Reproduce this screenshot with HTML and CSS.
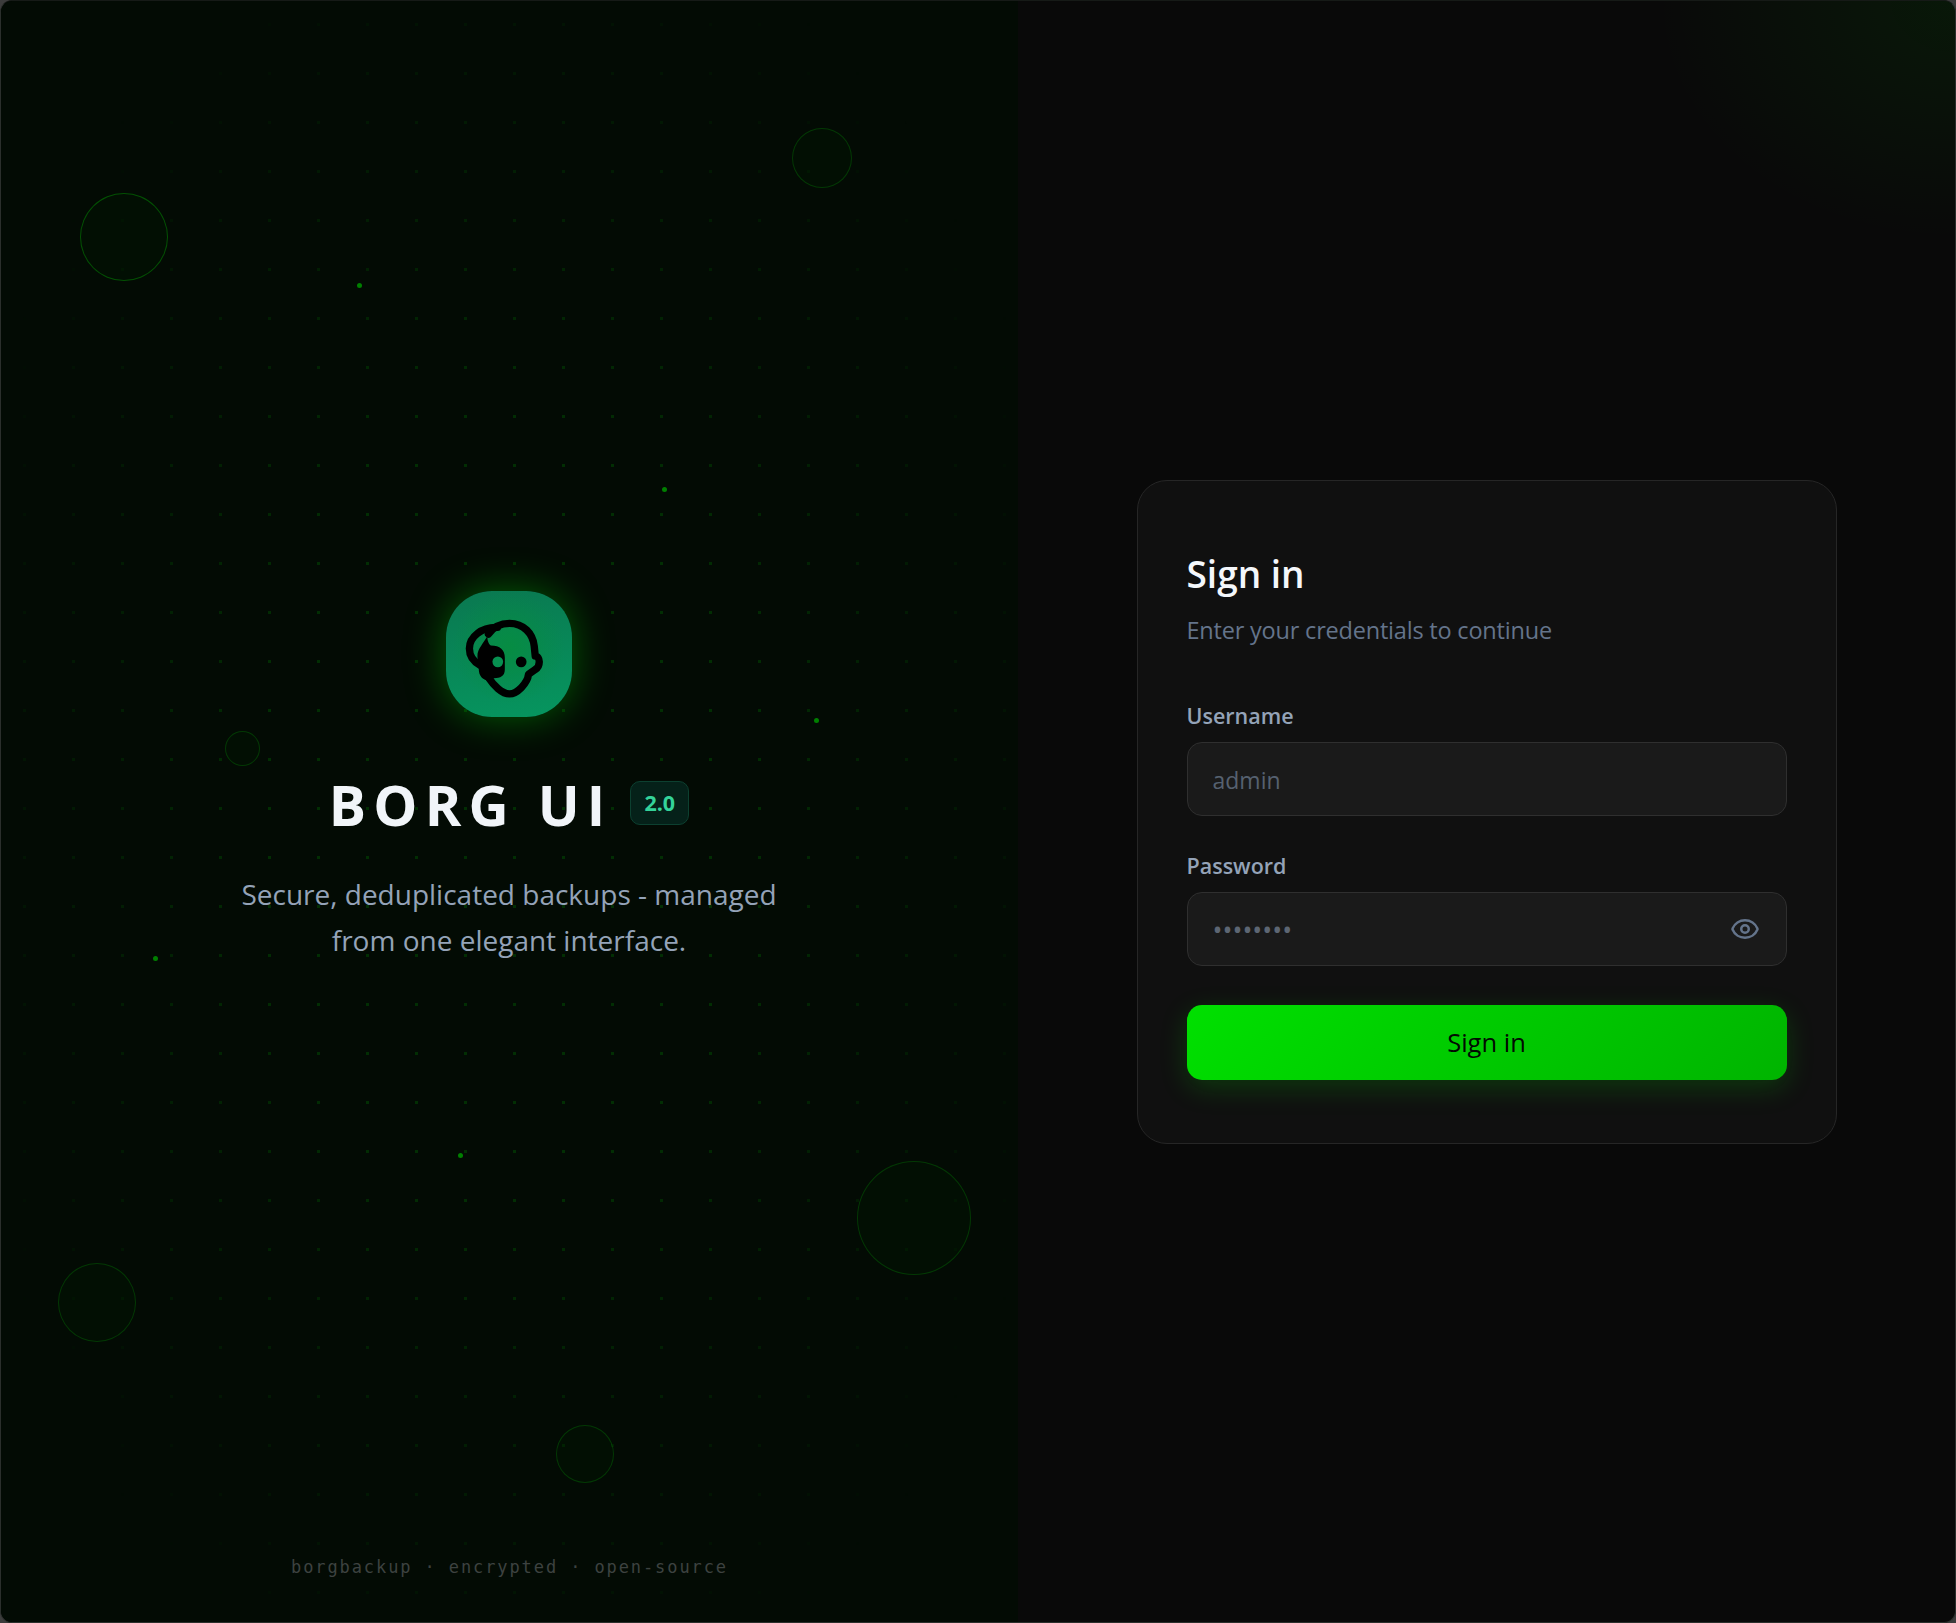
FILE: index.html
```html
<!DOCTYPE html>
<html>
<head>
  <title>Borg UI - Sign in</title>
  <link rel="stylesheet" href="styles.css">
</head>
<body>
  <div class="window">
    <div class="brand-panel">
      <div class="dot-grid"></div>

      <span class="bubble bubble-a"></span>
      <span class="bubble bubble-b"></span>
      <span class="bubble bubble-c"></span>
      <span class="bubble bubble-d"></span>
      <span class="bubble bubble-e"></span>
      <span class="bubble bubble-f"></span>

      <span class="spark spark-a"></span>
      <span class="spark spark-b"></span>
      <span class="spark spark-c"></span>
      <span class="spark spark-d"></span>
      <span class="spark spark-e"></span>

      <div class="brand">
        <div class="logo">
          <svg viewBox="78 63 377 377" class="logo-icon">
            <path class="logo-line" d="M205 192C222 168 245 160 268 160C310 160 338 190 342 228L345 258C360 258 362 288 345 298L325 312C322 340 290 371 268 371C245 371 220 345 205 322"/>
            <path class="logo-line" d="M232 172C185 170 148 200 148 235C148 258 162 275 180 285"/>
            <path class="logo-fill" d="M205 192C198 205 205 222 212 226C240 226 254 240 254 262L254 298C254 318 240 324 222 324L205 331C188 330 176 318 176 296C176 282 172 268 172 258C172 235 190 222 205 192Z"/>
            <circle class="logo-eye-hole" cx="233" cy="275" r="16"/>
            <circle class="logo-fill" cx="303" cy="275" r="16"/>
          </svg>
        </div>
        <div class="brand-title">
          <h1>BORG UI</h1>
          <span class="version">2.0</span>
        </div>
        <p class="tagline">Secure, deduplicated backups - managed<br>from one elegant interface.</p>
      </div>

      <div class="brand-footer">borgbackup · encrypted · open-source</div>
    </div>

    <div class="login-panel">
      <div class="card">
        <h2>Sign in</h2>
        <div class="subtitle">Enter your credentials to continue</div>

        <form class="login-form">
          <div class="field">
            <label for="username">Username</label>
            <input type="text" id="username" placeholder="admin">
          </div>
          <div class="field">
            <label for="password">Password</label>
            <div class="password-wrap">
              <input type="password" id="password" value="password">
              <span class="eye">
                <svg viewBox="0 0 24 24" width="30" height="30" fill="none" stroke="currentColor" stroke-width="2" stroke-linecap="round" stroke-linejoin="round">
                  <path d="M2.06 12.35a1 1 0 0 1 0-.7 10.75 10.75 0 0 1 19.88 0 1 1 0 0 1 0 .7 10.75 10.75 0 0 1-19.88 0"/>
                  <circle cx="12" cy="12" r="3"/>
                </svg>
              </span>
            </div>
          </div>
          <button type="button" class="submit">Sign in</button>
        </form>
      </div>
    </div>
  </div>
</body>
</html>
```

FILE: styles.css
```css
* {
  margin: 0;
  padding: 0;
  box-sizing: border-box;
}

html {
  background: #3c3c3c;
}

body {
  font-family: "Open Sans", "Noto Sans", sans-serif;
  width: 1956px;
  height: 1623px;
  overflow: hidden;
  color: #f1f5f9;
}

.window {
  display: flex;
  width: 100%;
  height: 100%;
  background: #090909;
  border: 1px solid #2b2f2c;
  border-top-color: #161a17;
  border-radius: 12px;
  overflow: hidden;
}

/* Left side */
.brand-panel {
  position: relative;
  width: 1017px;
  display: flex;
  flex-direction: column;
  align-items: center;
  justify-content: center;
  background: #030b04;
  overflow: hidden;
}

.dot-grid {
  position: absolute;
  top: -1px;
  left: -1px;
  right: 0;
  bottom: 0;
  background-image: radial-gradient(circle, rgba(0, 221, 0, 0.17) 1.6px, transparent 2px);
  background-size: 49px 49px;
  -webkit-mask-image: radial-gradient(ellipse 58% 58% at 50% 50%, #000 40%, transparent 100%);
  mask-image: radial-gradient(ellipse 58% 58% at 50% 50%, #000 40%, transparent 100%);
}

.bubble {
  position: absolute;
  border-radius: 50%;
  border: 1.5px solid rgba(0, 221, 0, 0.2);
  background: rgba(0, 221, 0, 0.025);
}

.bubble-a { left: 79px; top: 192px; width: 88px; height: 88px; border-color: rgba(0, 221, 0, 0.32); }
.bubble-b { left: 791px; top: 127px; width: 60px; height: 60px; }
.bubble-c { left: 224px; top: 730px; width: 35px; height: 35px; }
.bubble-d { left: 856px; top: 1160px; width: 114px; height: 114px; }
.bubble-e { left: 57px; top: 1262px; width: 78px; height: 79px; }
.bubble-f { left: 555px; top: 1424px; width: 58px; height: 58px; }

.spark {
  position: absolute;
  width: 5px;
  height: 5px;
  border-radius: 50%;
  background: #007f00;
}

.spark-a { left: 356px; top: 282px; }
.spark-b { left: 661px; top: 486px; }
.spark-c { left: 813px; top: 717px; }
.spark-d { left: 152px; top: 955px; }
.spark-e { left: 457px; top: 1152px; }

.brand {
  position: relative;
  display: flex;
  flex-direction: column;
  align-items: center;
  margin-right: 1px;
  margin-bottom: 56px;
  margin-top: -14px;
}

.logo {
  width: 126px;
  height: 126px;
  border-radius: 46px;
  background: radial-gradient(circle at 50% 45%, #068c42 0%, rgba(6, 140, 66, 0) 60%), linear-gradient(170deg, #0a7850 0%, #06965f 100%);
  box-shadow: 0 0 40px rgba(0, 221, 0, 0.4);
}

.logo-icon {
  display: block;
  width: 126px;
  height: 126px;
}

.logo-line {
  fill: none;
  stroke: #000;
  stroke-width: 22;
  stroke-linecap: round;
  stroke-linejoin: round;
}

.logo-fill {
  fill: #000;
}

.logo-eye-hole {
  fill: #079050;
}

.brand-title {
  display: flex;
  align-items: center;
  gap: 25px;
  margin-top: 53px;
}

.brand-title h1 {
  font-size: 55.5px;
  font-weight: 700;
  line-height: 70px;
  letter-spacing: 0.13em;
  margin-right: -7px;
}

.version {
  padding: 0 13px;
  height: 44px;
  line-height: 42px;
  margin-top: -4px;
  font-size: 21.5px;
  font-weight: 700;
  color: #34d399;
  background: #052119;
  border: 1px solid #0c4030;
  border-radius: 10px;
}

.tagline {
  margin-top: 31px;
  text-align: center;
  font-size: 28px;
  line-height: 46px;
  color: #94a3b8;
}

.brand-footer {
  position: absolute;
  left: 0;
  right: 0;
  bottom: 45px;
  text-align: center;
  font-family: "DejaVu Sans Mono", monospace;
  font-size: 17px;
  letter-spacing: 1.9px;
  color: #3d4240;
}

/* Right side */
.login-panel {
  position: relative;
  flex: 1;
  display: flex;
  align-items: center;
  justify-content: center;
  background: radial-gradient(ellipse 300px 240px at 100% 0, rgba(0, 221, 0, 0.07) 0%, transparent 100%);
}

.card {
  width: 700px;
  height: 664px;
  padding: 68px 49px 61px;
  background: #101010;
  border: 1px solid #262626;
  border-radius: 30px;
}

.card h2 {
  font-size: 37px;
  font-weight: 600;
  line-height: 50px;
  color: #f4f7fb;
}

.subtitle {
  margin-top: 12px;
  font-size: 23.5px;
  letter-spacing: -0.2px;
  line-height: 38px;
  color: #64748b;
}

.login-form {
  margin-top: 53px;
}

.field {
  margin-bottom: 36px;
}

.field label {
  display: block;
  margin-bottom: 12px;
  font-size: 21.5px;
  font-weight: 600;
  line-height: 28px;
  color: #94a3b8;
}

.field input {
  display: block;
  width: 100%;
  height: 74px;
  padding: 2px 25px 0;
  font-family: inherit;
  font-size: 23px;
  color: #5d6673;
  background: #1a1a1a;
  border: 1px solid #2f2f2f;
  border-radius: 15px;
  outline: none;
}

.field input[type="password"] {
  font-size: 26.5px;
}

.field input::placeholder {
  color: #566170;
  opacity: 1;
}

.password-wrap {
  position: relative;
}

.eye {
  position: absolute;
  top: 22px;
  right: 27px;
  color: #64748b;
  line-height: 0;
}

.submit {
  display: block;
  width: 100%;
  height: 75px;
  margin-top: 39px;
  font-family: inherit;
  font-size: 25.5px;
  font-weight: 500;
  color: #020a02;
  background: linear-gradient(135deg, #00e000 0%, #00b400 100%);
  border: none;
  border-radius: 15px;
  box-shadow: 0 8px 28px rgba(0, 221, 0, 0.2);
}
```
